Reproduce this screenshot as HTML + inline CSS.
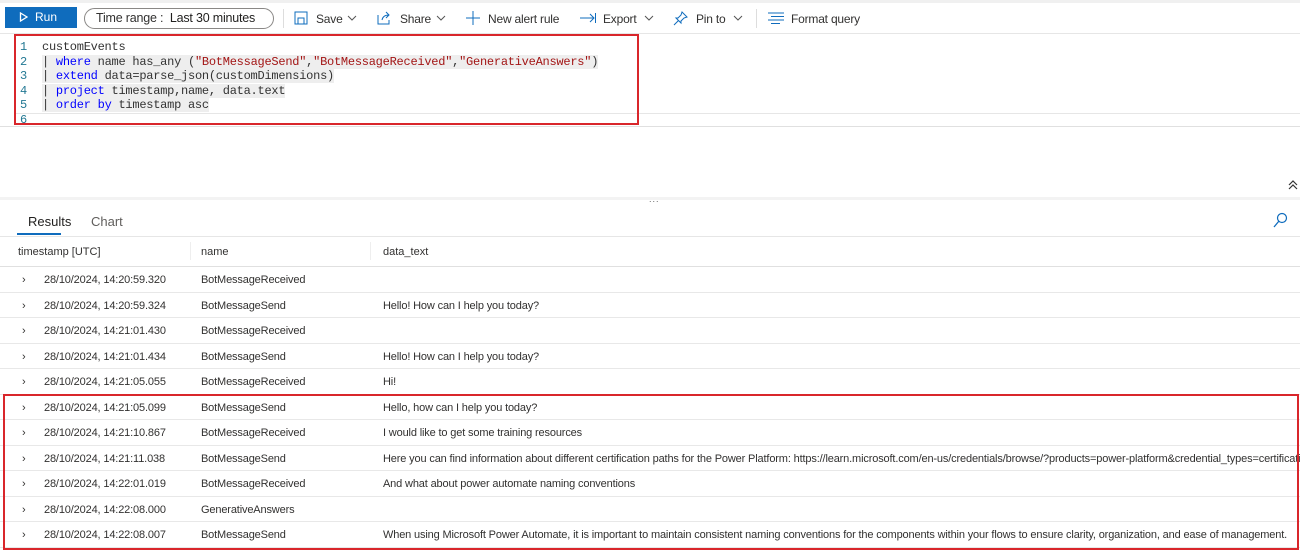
<!DOCTYPE html>
<html><head><meta charset="utf-8"><style>
*{margin:0;padding:0;box-sizing:border-box}
body{width:1300px;height:560px;background:#fff;font-family:"Liberation Sans",sans-serif;color:#323130;position:relative;overflow:hidden;font-size:12px}
.a{position:absolute;white-space:nowrap}
.tb{font-size:12px;color:#323130;letter-spacing:-0.2px}
.code{font-family:"Liberation Mono",monospace;font-size:12px;line-height:14.6px;color:#333;letter-spacing:-0.25px}
.ln{color:#237893;font-family:"Liberation Mono",monospace;font-size:12px;line-height:14.6px}
.k{color:#0000ff}.s{color:#a31515}
.row{position:absolute;left:0;width:1300px;height:25.5px;border-bottom:1px solid #e8e8e8;font-size:11px;letter-spacing:-0.15px;line-height:27px;overflow:hidden}
.row span{position:absolute;top:0;white-space:nowrap}
.hl{background:#eeeeee}
</style></head><body>
<div class="a" style="left:0;top:0;width:1300px;height:3px;background:#f0f0f0"></div>
<div class="a" style="left:5px;top:7px;width:72px;height:21px;background:#0f6cbd;color:#fff;font-size:12px;line-height:21px;padding-left:14px">
<svg width="9" height="10" style="position:absolute;left:14px;top:5px"><path d="M1.5 1 L8 5 L1.5 9 Z" fill="none" stroke="#fff" stroke-width="1.3"/></svg><span style="margin-left:16px">Run</span></div>
<div class="a tb" style="left:84px;top:8px;width:190px;height:21px;border:1px solid #8a8886;border-radius:11px;line-height:19px;padding-left:11px;font-size:12.5px">Time range : &nbsp;<span style="color:#201f1e">Last 30 minutes</span></div>
<div class="a" style="left:283px;top:9px;width:1px;height:19px;background:#ddd"></div>
<svg class="a" style="left:294px;top:11px" width="14" height="14"><rect x="1" y="1" width="12" height="12" fill="none" stroke="#0f6cbd"/><rect x="4" y="7" width="6" height="6" fill="none" stroke="#0f6cbd"/></svg>
<div class="a tb" style="left:316px;top:12px">Save</div>
<svg class="a" style="left:347px;top:15px" width="10" height="6"><path d="M1 1 L5 5 L9 1" fill="none" stroke="#555"/></svg>
<svg class="a" style="left:377px;top:11px" width="15" height="14"><path d="M1 4 V13 H12 V9 M5 9 Q6 4 12 4 M9 1 L12 4 L9 7" fill="none" stroke="#0f6cbd"/></svg>
<div class="a tb" style="left:400px;top:12px">Share</div>
<svg class="a" style="left:436px;top:15px" width="10" height="6"><path d="M1 1 L5 5 L9 1" fill="none" stroke="#555"/></svg>
<svg class="a" style="left:466px;top:11px" width="14" height="14"><path d="M7 0 V14 M0 7 H14" stroke="#0f6cbd"/></svg>
<div class="a tb" style="left:488px;top:12px">New alert rule</div>
<svg class="a" style="left:580px;top:13px" width="16" height="10"><path d="M0 5 H14 M10 1 L14 5 L10 9 M15.5 0 V10" fill="none" stroke="#0f6cbd"/></svg>
<div class="a tb" style="left:603px;top:12px">Export</div>
<svg class="a" style="left:644px;top:15px" width="10" height="6"><path d="M1 1 L5 5 L9 1" fill="none" stroke="#555"/></svg>
<svg class="a" style="left:673px;top:11px" width="15" height="15"><path d="M9 1 L14 6 L11 7 L8 10 L8 12 L3 7 L5 7 L8 4 Z M5.5 9.5 L1 14" fill="none" stroke="#0f6cbd"/></svg>
<div class="a tb" style="left:696px;top:12px">Pin to</div>
<svg class="a" style="left:733px;top:15px" width="10" height="6"><path d="M1 1 L5 5 L9 1" fill="none" stroke="#555"/></svg>
<div class="a" style="left:756px;top:9px;width:1px;height:19px;background:#ddd"></div>
<svg class="a" style="left:768px;top:12px" width="16" height="12"><path d="M0 1H16M3 4.5H16M0 8H16M3 11.5H12" stroke="#0f6cbd"/></svg>
<div class="a tb" style="left:791px;top:12px">Format query</div>
<div class="a" style="left:0;top:33px;width:1300px;height:1px;background:#e6e6e6"></div>
<div class="a" style="left:14px;top:113px;width:1286px;height:1px;background:#e6e6e6"></div>
<div class="a" style="left:0;top:126px;width:1300px;height:1px;background:#e0e0e0"></div>
<div class="a ln" style="left:20px;top:40px">1<br>2<br>3<br>4<br>5<br>6</div>
<div class="a code" style="left:42px;top:40px">customEvents<br>
<span class="hl">| <span class="k">where</span> name has_any (<span class="s">"BotMessageSend"</span>,<span class="s">"BotMessageReceived"</span>,<span class="s">"GenerativeAnswers"</span>)</span><br>
<span class="hl">| <span class="k">extend</span> data=parse_json(customDimensions) </span><br>
<span class="hl">| <span class="k">project</span> timestamp,name, data.text</span><br>
<span class="hl">| <span class="k">order by</span> timestamp asc</span></div>
<div class="a" style="left:14px;top:34px;width:625px;height:91px;border:2px solid #d9262b"></div>
<div class="a" style="left:0;top:197px;width:1300px;height:3px;background:#f3f3f3"></div>
<div class="a" style="left:649px;top:194px;font-size:9px;color:#666;letter-spacing:1px">...</div>
<svg class="a" style="left:1288px;top:180px" width="10" height="10"><path d="M1 5 L5 1 L9 5 M1 9 L5 5 L9 9" fill="none" stroke="#333" stroke-width="1.2"/></svg>
<div class="a" style="left:28px;top:214px;font-size:13px;color:#201f1e">Results</div>
<div class="a" style="left:91px;top:214px;font-size:13px;color:#605e5c">Chart</div>
<div class="a" style="left:17px;top:233px;width:44px;height:2px;background:#0f6cbd"></div>
<svg class="a" style="left:1272px;top:212px" width="16" height="16"><circle cx="10" cy="6" r="4.5" fill="none" stroke="#0f6cbd" stroke-width="1.2"/><path d="M7 9 L2 15" stroke="#0f6cbd" stroke-width="1.3"/></svg>
<div class="a" style="left:0;top:236px;width:1300px;height:1px;background:#e6e6e6"></div>
<div class="a" style="left:190px;top:242px;width:1px;height:18px;background:#eee"></div>
<div class="a" style="left:370px;top:242px;width:1px;height:18px;background:#eee"></div>
<div class="a" style="left:18px;top:246px;font-size:11px">timestamp [UTC]</div>
<div class="a" style="left:201px;top:246px;font-size:11px">name</div>
<div class="a" style="left:383px;top:246px;font-size:11px">data_text</div>
<div class="a" style="left:0;top:266px;width:1300px;height:1px;background:#e0e0e0"></div>
<div style="position:absolute;left:0;top:267px">
<div class="row" style="top:0"><span style="left:22px">›</span><span style="left:44px">28/10/2024, 14:20:59.320</span><span style="left:201px">BotMessageReceived</span></div>
<div class="row" style="top:25.5px"><span style="left:22px">›</span><span style="left:44px">28/10/2024, 14:20:59.324</span><span style="left:201px">BotMessageSend</span><span style="left:383px">Hello! How can I help you today?</span></div>
<div class="row" style="top:51px"><span style="left:22px">›</span><span style="left:44px">28/10/2024, 14:21:01.430</span><span style="left:201px">BotMessageReceived</span></div>
<div class="row" style="top:76.5px"><span style="left:22px">›</span><span style="left:44px">28/10/2024, 14:21:01.434</span><span style="left:201px">BotMessageSend</span><span style="left:383px">Hello! How can I help you today?</span></div>
<div class="row" style="top:102px"><span style="left:22px">›</span><span style="left:44px">28/10/2024, 14:21:05.055</span><span style="left:201px">BotMessageReceived</span><span style="left:383px">Hi!</span></div>
<div class="row" style="top:127.5px"><span style="left:22px">›</span><span style="left:44px">28/10/2024, 14:21:05.099</span><span style="left:201px">BotMessageSend</span><span style="left:383px">Hello, how can I help you today?</span></div>
<div class="row" style="top:153px"><span style="left:22px">›</span><span style="left:44px">28/10/2024, 14:21:10.867</span><span style="left:201px">BotMessageReceived</span><span style="left:383px">I would like to get some training resources</span></div>
<div class="row" style="top:178.5px"><span style="left:22px">›</span><span style="left:44px">28/10/2024, 14:21:11.038</span><span style="left:201px">BotMessageSend</span><span style="left:383px">Here you can find information about different certification paths for the Power Platform: https://learn.microsoft.com/en-us/credentials/browse/?products=power-platform&amp;credential_types=certification</span></div>
<div class="row" style="top:204px"><span style="left:22px">›</span><span style="left:44px">28/10/2024, 14:22:01.019</span><span style="left:201px">BotMessageReceived</span><span style="left:383px">And what about power automate naming conventions</span></div>
<div class="row" style="top:229.5px"><span style="left:22px">›</span><span style="left:44px">28/10/2024, 14:22:08.000</span><span style="left:201px">GenerativeAnswers</span></div>
<div class="row" style="top:255px"><span style="left:22px">›</span><span style="left:44px">28/10/2024, 14:22:08.007</span><span style="left:201px">BotMessageSend</span><span style="left:383px">When using Microsoft Power Automate, it is important to maintain consistent naming conventions for the components within your flows to ensure clarity, organization, and ease of management.</span></div>
</div>
<div class="a" style="left:3px;top:394px;width:1296px;height:156px;border:2px solid #d9262b"></div>
</body></html>
